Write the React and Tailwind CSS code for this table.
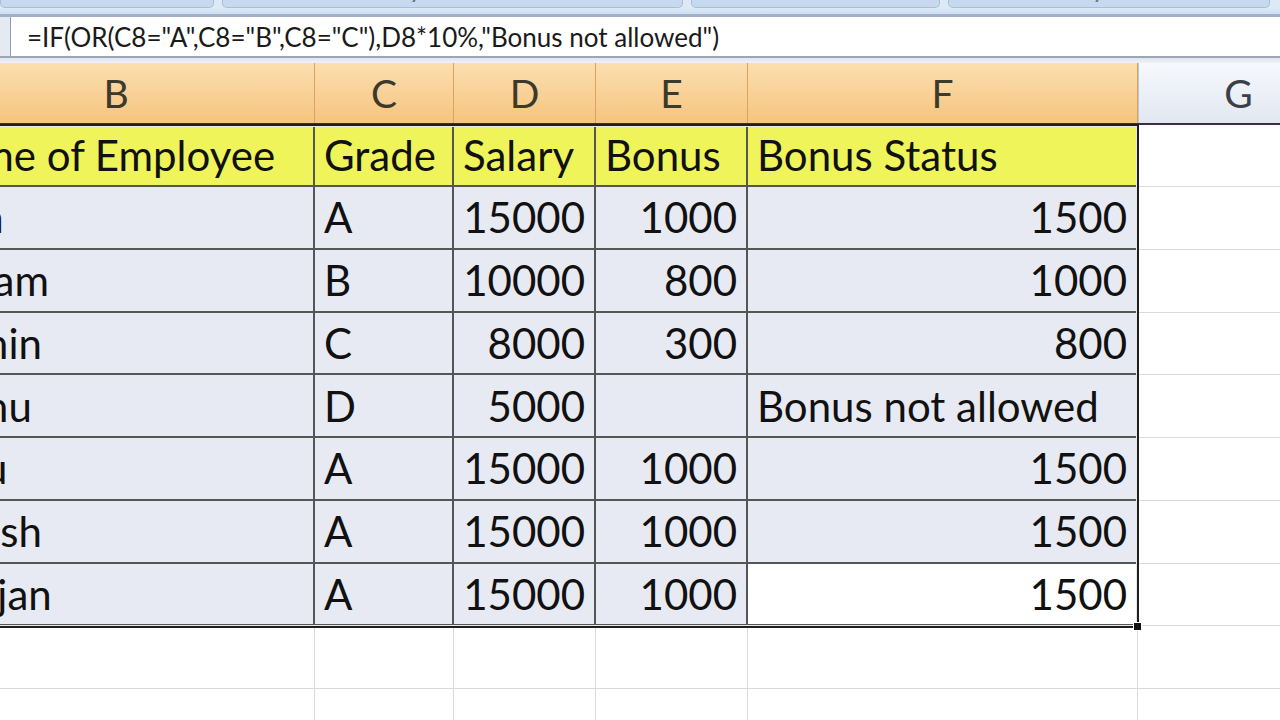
import React from 'react';

// Excel 2007 style sheet, zoomed in on the bonus table

const rows = [
  { name: 'Ivan', grade: 'A', salary: '15000', bonus: '1000', status: '1500' },
  { name: 'Shyam', grade: 'B', salary: '10000', bonus: '800', status: '1000' },
  { name: 'Ramin', grade: 'C', salary: '8000', bonus: '300', status: '800' },
  { name: 'Ramu', grade: 'D', salary: '5000', bonus: '', status: 'Bonus not allowed' },
  { name: 'Raju', grade: 'A', salary: '15000', bonus: '1000', status: '1500' },
  { name: 'Ritesh', grade: 'A', salary: '15000', bonus: '1000', status: '1500' },
  { name: 'Ranjan', grade: 'A', salary: '15000', bonus: '1000', status: '1500' },
];

const headCell = 'shrink-0 flex items-center justify-center h-full border-r border-[#dda35e] bg-gradient-to-b from-[#fbdfb0] to-[#f6c47e] text-[39px] text-[#3b3a2c]';
const dataCell = 'shrink-0 flex items-center h-full border-r-2 border-b-2 border-[#555] text-[42px] text-[#111] leading-none whitespace-nowrap';
const emptyCell = 'shrink-0 h-full border-r border-b border-[#d9d9d9]';

const App = () => {
  return (
    <div className="relative w-[1280px] h-[720px] overflow-hidden bg-white font-[Lato,sans-serif]">
      {/* ribbon tab bottoms */}
      <div className="flex h-[8px] gap-[8px] bg-[#dde9f6]">
        <div className="w-[214px] bg-[#c7d9ee] border border-t-0 border-[#a9bed7] rounded-b-[5px]" />
        <div className="relative w-[461px] overflow-hidden bg-[#c7d9ee] border border-t-0 border-[#a9bed7] rounded-b-[5px]">
          <span className="absolute left-[186px] -top-[26px] text-[26px] leading-none text-[#6a7486]">y</span>
        </div>
        <div className="w-[249px] bg-[#c7d9ee] border border-t-0 border-[#a9bed7] rounded-b-[5px]" />
        <div className="relative w-[322px] overflow-hidden bg-[#c7d9ee] border border-t-0 border-[#a9bed7] rounded-b-[5px]">
          <span className="absolute left-[143px] -top-[26px] text-[26px] leading-none text-[#6a7486]">y</span>
        </div>
      </div>
      <div className="h-[6px] bg-gradient-to-b from-[#dde9f6] to-[#cddff2]" />
      <div className="h-[3px] bg-[#a3afc7]" />

      {/* formula bar */}
      <div className="flex h-[39px]">
        <div className="w-[11px] bg-[#e4eaf2] border-r border-[#8f9cb2]" />
        <div className="flex-1 flex items-center pl-[16px] bg-white text-[26px] leading-none text-[#1a1a1a] whitespace-nowrap">
          =IF(OR(C8="A",C8="B",C8="C"),D8*10%,"Bonus not allowed")
        </div>
      </div>
      <div className="h-[2px] bg-[#9ea6b4]" />
      <div className="h-[5px] bg-gradient-to-b from-[#dfe6ef] to-[#eef2f8]" />

      {/* grid */}
      <div className="relative -ml-[82px] w-[1430px]">
        {/* column headers */}
        <div className="flex h-[62px] border-b-2 border-[#3b2d48]">
          <div className={`${headCell} w-[397px]`}>B</div>
          <div className={`${headCell} w-[139px]`}>C</div>
          <div className={`${headCell} w-[142px]`}>D</div>
          <div className={`${headCell} w-[152px]`}>E</div>
          <div className={`${headCell} w-[390px]`}>F</div>
          <div className="shrink-0 w-[200px] flex items-center justify-center h-full border-l border-[#b9c6d6] bg-gradient-to-b from-[#f6f8fc] to-[#e2e8f1] text-[39px] text-[#3b3f48]">
            G
          </div>
        </div>

        {/* header row of the table */}
        <div className="flex h-[62px]">
          <div className={`${dataCell} w-[397px] pl-[9px] bg-[#eef45a]`}>Name of Employee</div>
          <div className={`${dataCell} w-[139px] pl-[9px] bg-[#eef45a]`}>Grade</div>
          <div className={`${dataCell} w-[142px] pl-[9px] bg-[#eef45a]`}>Salary</div>
          <div className={`${dataCell} w-[152px] pl-[9px] bg-[#eef45a]`}>Bonus</div>
          <div className={`${dataCell} w-[390px] pl-[9px] bg-[#eef45a]`}>Bonus Status</div>
          <div className="shrink-0 w-[200px] h-full border-b border-[#dadada]" />
        </div>

        {rows.map((r, i) => {
          const last = i === rows.length - 1;
          return (
            <div key={i} className="flex h-[62.75px]">
              <div className={`${dataCell} w-[397px] pl-[9px] bg-[#e7eaf2]`}>{r.name}</div>
              <div className={`${dataCell} w-[139px] pl-[9px] bg-[#e7eaf2]`}>{r.grade}</div>
              <div className={`${dataCell} w-[142px] justify-end pr-[9px] bg-[#e7eaf2]`}>{r.salary}</div>
              <div className={`${dataCell} w-[152px] justify-end pr-[9px] bg-[#e7eaf2]`}>{r.bonus}</div>
              <div
                className={`${dataCell} w-[390px] ${r.bonus ? 'justify-end pr-[9px]' : 'pl-[9px]'} ${last ? 'bg-white' : 'bg-[#e7eaf2]'}`}
              >
                {r.status}
              </div>
              <div className="shrink-0 w-[200px] h-full border-b border-[#dadada]" />
            </div>
          );
        })}

        {/* empty rows */}
        {[0, 1].map(i => (
          <div key={i} className="flex h-[63px]">
            <div className={`${emptyCell} w-[397px]`} />
            <div className={`${emptyCell} w-[139px]`} />
            <div className={`${emptyCell} w-[142px]`} />
            <div className={`${emptyCell} w-[152px]`} />
            <div className={`${emptyCell} w-[390px]`} />
            <div className="shrink-0 w-[200px] h-full border-b border-[#d9d9d9]" />
          </div>
        ))}

        {/* selection outline + fill handle */}
        <div className="absolute left-0 top-[61px] w-[1221px] h-[504px] border-2 border-[#1f1f1f] pointer-events-none">
          <div className="w-full h-full border border-[#e8e8e8]" />
        </div>
        <div className="absolute left-[1215px] top-[559px] w-[9px] h-[9px] bg-[#111] border border-white" />
      </div>
    </div>
  );
};

export default App;
